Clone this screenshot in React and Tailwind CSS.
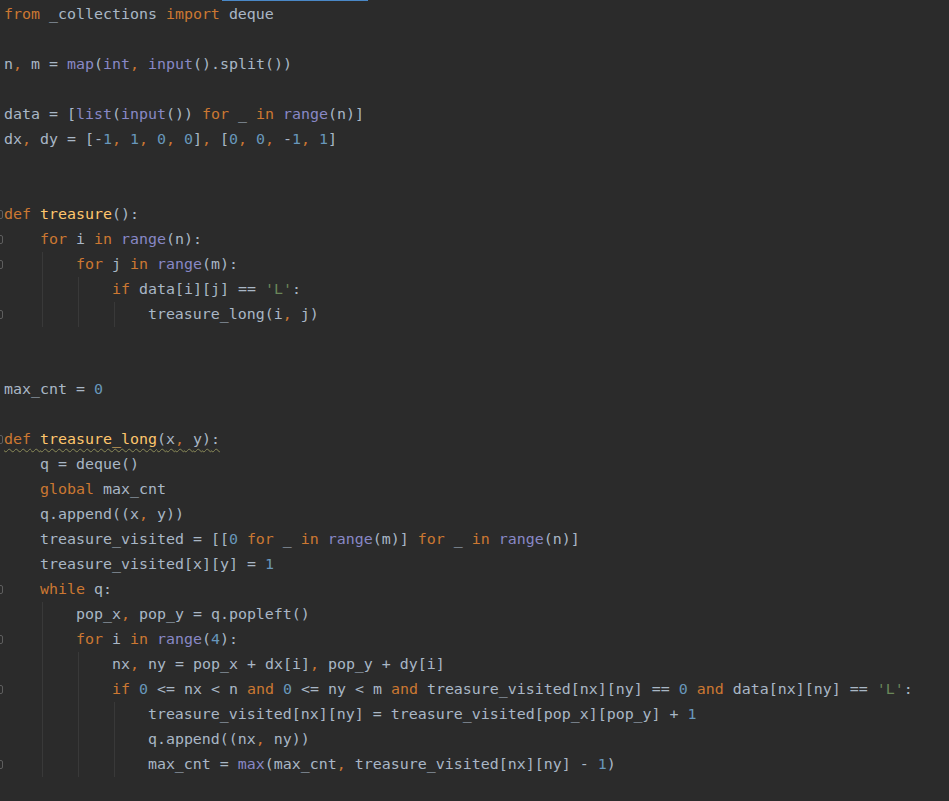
import React from "react";

const CODE = [
  "from _collections import deque",
  "",
  "n, m = map(int, input().split())",
  "",
  "data = [list(input()) for _ in range(n)]",
  "dx, dy = [-1, 1, 0, 0], [0, 0, -1, 1]",
  "",
  "",
  "def treasure():",
  "    for i in range(n):",
  "        for j in range(m):",
  "            if data[i][j] == 'L':",
  "                treasure_long(i, j)",
  "",
  "",
  "max_cnt = 0",
  "",
  "def treasure_long(x, y):",
  "    q = deque()",
  "    global max_cnt",
  "    q.append((x, y))",
  "    treasure_visited = [[0 for _ in range(m)] for _ in range(n)]",
  "    treasure_visited[x][y] = 1",
  "    while q:",
  "        pop_x, pop_y = q.popleft()",
  "        for i in range(4):",
  "            nx, ny = pop_x + dx[i], pop_y + dy[i]",
  "            if 0 <= nx < n and 0 <= ny < m and treasure_visited[nx][ny] == 0 and data[nx][ny] == 'L':",
  "                treasure_visited[nx][ny] = treasure_visited[pop_x][pop_y] + 1",
  "                q.append((nx, ny))",
  "                max_cnt = max(max_cnt, treasure_visited[nx][ny] - 1)",
];

const KEYWORDS = new Set(["from", "import", "for", "in", "if", "def", "global", "while", "and"]);
const BUILTINS = new Set(["map", "int", "input", "list", "range", "max"]);
const FOLDS = new Set([8, 9, 10, 12, 17, 23, 25, 27, 30]);
const GUIDE_CLASS = { 4: "left-[42px]", 8: "left-[78px]", 12: "left-[114px]" };

function tokenize(line) {
  const re = /('[^']*'|\d+|[A-Za-z_]\w*|,|\s+|.)/g;
  const out = [];
  let m;
  let prev = null;
  while ((m = re.exec(line))) {
    const t = m[0];
    let cls = "text-[#a9b7c6]";
    if (t.startsWith("'")) cls = "text-[#6a8759]";
    else if (/^\d+$/.test(t)) cls = "text-[#6897bb]";
    else if (t === ",") cls = "text-[#cc7832]";
    else if (KEYWORDS.has(t)) cls = "text-[#cc7832]";
    else if (BUILTINS.has(t)) cls = "text-[#8888c6]";
    else if (prev === "def" && /^[A-Za-z_]/.test(t)) cls = "text-[#ffc66d]";
    if (!/^\s+$/.test(t)) prev = t;
    out.push({ t, cls });
  }
  return out;
}

function CodeLine({ text, index }) {
  const indent = text.length - text.trimStart().length;
  const guides = [];
  if (text.trim().length) {
    for (let c = 4; c < indent; c += 4) guides.push(c);
  }
  const tokens = tokenize(text);
  const warn = index === 17;
  return (
    <div className="relative h-[25px] leading-[25px] whitespace-pre pl-[4px]">
      {FOLDS.has(index) && (
        <span className="absolute -left-[5px] top-[8px] w-[8px] h-[9px] border border-[#5e5e5e] rounded-[2px]" />
      )}
      {guides.map((c) => (
        <span key={c} className={"absolute top-0 bottom-0 w-px bg-[#393939] " + GUIDE_CLASS[c]} />
      ))}
      <span
        className={
          warn
            ? "underline decoration-wavy decoration-[#8a8a58] decoration-1 underline-offset-[4px]"
            : ""
        }
      >
        {tokens.map((tk, i) => (
          <span key={i} className={tk.cls}>
            {tk.t}
          </span>
        ))}
      </span>
    </div>
  );
}

export default function App() {
  return (
    <div className="w-[949px] h-[801px] bg-[#2b2b2b] overflow-hidden font-['DejaVu_Sans_Mono',monospace] text-[14.95px]">
      <div className="h-px ml-[222px] w-[146px] bg-[#4a88c7]" />
      <div className="pt-[1px]">
        {CODE.map((line, i) => (
          <CodeLine key={i} text={line} index={i} />
        ))}
      </div>
    </div>
  );
}
